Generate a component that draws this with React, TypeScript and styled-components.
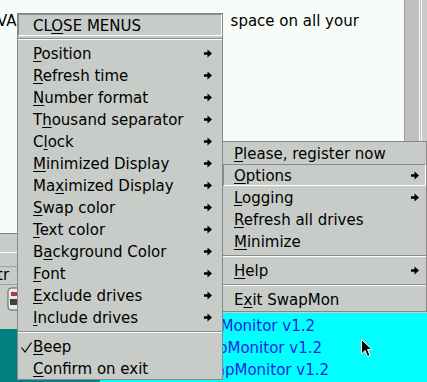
import React from "react";
import styled, { createGlobalStyle } from "styled-components";

const Global = createGlobalStyle`
  html, body { margin: 0; padding: 0; }
  body {
    width: 427px; height: 382px; overflow: hidden;
    font-family: "DejaVu Sans", "Liberation Sans", sans-serif;
    font-size: 15px; color: #000;
  }
`;

const Desktop = styled.div`
  position: relative;
  width: 427px;
  height: 382px;
  overflow: hidden;
  display: grid;
  grid-template-rows: 233px 96px 1fr;
  background: #008080;
`;

const ClientWindow = styled.div`
  display: flex;
`;

const TextArea = styled.div`
  flex: 1;
  background: #f8fcf8;
  padding-top: 12px;
  display: flex;
  align-items: flex-start;
  line-height: 18px;
  white-space: nowrap;
`;

const TextLeft = styled.span`
  margin-left: -3px;
`;

const TextRight = styled.span`
  margin-left: 214px;
`;

const ScrollBar = styled.div`
  width: 23px;
  background: #c0c0c0;
  border-left: 1px solid #9c9c9c;
  box-sizing: border-box;
  display: flex;
  justify-content: flex-end;
`;

const ScrollEdge = styled.div`
  width: 8px;
  border-left: 1px solid #fff;
  box-sizing: border-box;
  background: linear-gradient(to right, #b8b8b8 0 1px, #ffffff 1px 2px, #c8ccc8 2px);
`;

const ControlPanel = styled.div`
  background: #c8ccc8;
  border-top: 1px solid #808080;
  display: grid;
  grid-template-rows: 19px 14px 18px 1fr;
`;

const PanelLine = styled.div<{ $light?: boolean }>`
  border-bottom: 1px solid ${(p) => (p.$light ? "#ffffff" : "#a0a0a0")};
`;

const PanelLabel = styled.div`
  line-height: 16px;
  margin-left: -3px;
  border-bottom: 1px solid #a0a0a0;
`;

const IconSlot = styled.div`
  padding: 2px 0 0 7px;
`;

const MiniWindow = styled.div`
  position: absolute;
  left: 100px;
  right: 0;
  top: 313px;
  bottom: 0;
  background: #00ffff;
  color: #1c1ce8;
  padding-top: 2px;
  display: flex;
  flex-direction: column;
`;

const MiniLine = styled.div<{ $pad: number }>`
  line-height: 22px;
  text-align: right;
  padding-right: ${(p) => p.$pad}px;
  white-space: nowrap;
`;

const Menu = styled.div<{ $left: number; $top: number; $width: number }>`
  position: absolute;
  left: ${(p) => p.$left}px;
  top: ${(p) => p.$top}px;
  width: ${(p) => p.$width}px;
  background: #c8ccc8;
  border: 1px solid #888888;
  box-sizing: border-box;
  display: flex;
  flex-direction: column;
`;

const Item = styled.div<{ $pad: number; $right: number; $framed?: boolean }>`
  height: 22px;
  box-sizing: border-box;
  display: flex;
  align-items: center;
  padding-top: 2px;
  padding-left: ${(p) => p.$pad}px;
  padding-right: ${(p) => p.$right}px;
  white-space: nowrap;
  position: relative;
  ${(p) =>
    p.$framed
      ? `border-top: 1px solid #8c8c8c; border-left: 1px solid #8c8c8c; border-bottom: 1px solid #ffffff; border-right: 1px solid #ffffff; padding-left: ${p.$pad - 1}px; padding-right: ${p.$right - 1}px; padding-top: 1px;`
      : ""}
`;

const Label = styled.span`
  flex: 1;
`;

const Key = styled.span`
  text-decoration: underline;
  text-underline-offset: 2px;
  text-decoration-thickness: 1px;
`;

const Separator = styled.div<{ $h: number }>`
  height: ${(p) => p.$h}px;
  display: flex;
  flex-direction: column;
  justify-content: center;
  &::before {
    content: "";
    display: block;
    border-top: 1px solid #8c8c8c;
    border-bottom: 1px solid #ffffff;
  }
`;

const MenuFoot = styled.div`
  height: 1px;
`;

const CheckSlot = styled.span`
  position: absolute;
  left: 3px;
  top: 7px;
  display: flex;
`;

const ArrowIcon = styled.svg`
  margin-top: -1px;
`;

const CursorIcon = styled.svg`
  position: absolute;
  left: 361px;
  top: 339px;
`;

const Arrow = () => (
  <ArrowIcon width="8" height="9" viewBox="0 0 8 9">
    <polygon points="0,3.2 3.5,3.2 3.5,0.5 8,4.5 3.5,8.5 3.5,5.8 0,5.8" fill="#000" />
  </ArrowIcon>
);

const Check = () => (
  <svg width="11" height="11" viewBox="0 0 11 11">
    <polyline points="0.5,5.5 4,10 10.5,0.5" fill="none" stroke="#000" strokeWidth="1.2" />
  </svg>
);

type Entry =
  | { kind: "item"; pre: string; key: string; post: string; arrow?: boolean; framed?: boolean; checked?: boolean }
  | { kind: "sep"; h: number };

const it = (pre: string, key: string, post: string, arrow = false, extra: Partial<{ framed: boolean; checked: boolean }> = {}): Entry => ({
  kind: "item", pre, key, post, arrow, ...extra,
});

const mainMenu: Entry[] = [
  it("CL", "O", "SE MENUS", false, { framed: true }),
  { kind: "sep", h: 6 },
  it("", "P", "osition", true),
  it("", "R", "efresh time", true),
  it("", "N", "umber format", true),
  it("T", "h", "ousand separator", true),
  it("C", "l", "ock", true),
  it("", "M", "inimized Display", true),
  it("Ma", "x", "imized Display", true),
  it("", "S", "wap color", true),
  it("", "T", "ext color", true),
  it("B", "a", "ckground Color", true),
  it("", "F", "ont", true),
  it("", "E", "xclude drives", true),
  it("", "I", "nclude drives", true),
  { kind: "sep", h: 7 },
  it("", "B", "eep", false, { checked: true }),
  it("", "C", "onfirm on exit"),
];

const subMenu: Entry[] = [
  it("", "P", "lease, register now"),
  it("", "O", "ptions", true, { framed: true }),
  it("", "L", "ogging", true),
  it("", "R", "efresh all drives"),
  it("", "M", "inimize"),
  { kind: "sep", h: 7 },
  it("", "H", "elp", true),
  { kind: "sep", h: 7 },
  it("E", "x", "it SwapMon"),
];

const MenuList: React.FC<{ entries: Entry[]; pad: number; right: number }> = ({ entries, pad, right }) => (
  <>
    {entries.map((e, i) =>
      e.kind === "sep" ? (
        <Separator key={i} $h={e.h} />
      ) : (
        <Item key={i} $pad={pad} $right={right} $framed={e.framed}>
          {e.checked && (
            <CheckSlot>
              <Check />
            </CheckSlot>
          )}
          <Label>
            {e.pre}
            <Key>{e.key}</Key>
            {e.post}
          </Label>
          {e.arrow && <Arrow />}
        </Item>
      )
    )}
  </>
);

const DiskIcon = () => (
  <svg width="12" height="24" viewBox="0 0 12 24">
    <rect x="1" y="1" width="14" height="22" rx="3" fill="#e8e8e8" stroke="#606060" />
    <rect x="4" y="5" width="6" height="4" fill="#a04040" />
    <rect x="3" y="12" width="7" height="6" fill="#404040" />
  </svg>
);

export default function App() {
  return (
    <>
      <Global />
      <Desktop>
        <ClientWindow>
          <TextArea>
            <TextLeft>VA</TextLeft>
            <TextRight>space on all your</TextRight>
          </TextArea>
          <ScrollBar>
            <ScrollEdge />
          </ScrollBar>
        </ClientWindow>
        <ControlPanel>
          <PanelLine $light />
          <PanelLine />
          <PanelLabel>tr</PanelLabel>
          <IconSlot>
            <DiskIcon />
          </IconSlot>
        </ControlPanel>
        <div />
        <MiniWindow>
          <MiniLine $pad={112}>SwapMonitor v1.2</MiniLine>
          <MiniLine $pad={105}>SwapMonitor v1.2</MiniLine>
          <MiniLine $pad={98}>SwapMonitor v1.2</MiniLine>
        </MiniWindow>
        <Menu $left={17} $top={13} $width={206}>
          <MenuList entries={mainMenu} pad={15} right={10} />
        </Menu>
        <Menu $left={222} $top={141} $width={205}>
          <MenuList entries={subMenu} pad={11} right={7} />
          <MenuFoot />
        </Menu>
        <CursorIcon width="12" height="19" viewBox="0 0 12 19">
          <polygon points="0.5,0.5 0.5,15 4,11.5 6.5,17.5 9,16.5 6.5,10.5 11,10.5" fill="#000" stroke="#fff" strokeWidth="1" />
        </CursorIcon>
      </Desktop>
    </>
  );
}
